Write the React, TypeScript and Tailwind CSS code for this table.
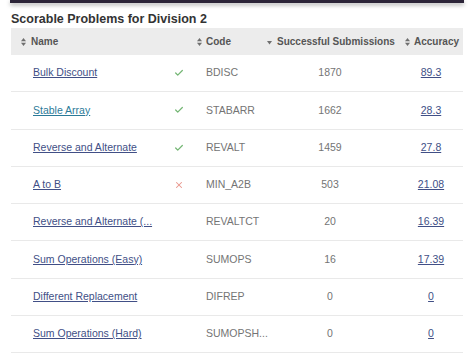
import { Check, X } from 'lucide-react';

type Row = {
  name: string;
  status: 'ok' | 'bad' | null;
  code: string;
  solved: string;
  accuracy: string;
  visited?: boolean;
};

const rows: Row[] = [
  { name: 'Bulk Discount', status: 'ok', code: 'BDISC', solved: '1870', accuracy: '89.3' },
  { name: 'Stable Array', status: 'ok', code: 'STABARR', solved: '1662', accuracy: '28.3', visited: true },
  { name: 'Reverse and Alternate', status: 'ok', code: 'REVALT', solved: '1459', accuracy: '27.8' },
  { name: 'A to B', status: 'bad', code: 'MIN_A2B', solved: '503', accuracy: '21.08' },
  { name: 'Reverse and Alternate (...', status: null, code: 'REVALTCT', solved: '20', accuracy: '16.39' },
  { name: 'Sum Operations (Easy)', status: null, code: 'SUMOPS', solved: '16', accuracy: '17.39' },
  { name: 'Different Replacement', status: null, code: 'DIFREP', solved: '0', accuracy: '0' },
  { name: 'Sum Operations (Hard)', status: null, code: 'SUMOPSH...', solved: '0', accuracy: '0' },
];

function SortIcon() {
  return (
    <svg width="5" height="8" viewBox="0 0 5 8" className="shrink-0">
      <path d="M2.5 0 L5 3.3 L0 3.3 Z" fill="#6f6f6f" />
      <path d="M2.5 8 L5 4.7 L0 4.7 Z" fill="#6f6f6f" />
    </svg>
  );
}

function SortDown() {
  return (
    <svg width="5" height="4" viewBox="0 0 5 4" className="shrink-0 mt-[2px]">
      <path d="M0 0 L5 0 L2.5 3.5 Z" fill="#6f6f6f" />
    </svg>
  );
}

const cols = 'grid grid-cols-[154px_27px_70px_138px_64px]';

export default function App() {
  return (
    <div
      className="w-[474px] h-[355px] overflow-hidden bg-white"
      style={{ fontFamily: '"Liberation Sans", Arial, sans-serif' }}
    >
      <div className="ml-[10px] w-[454px] h-[3px] bg-[#2c2438] shadow-[0_2px_4px_rgba(0,0,0,0.35)]" />

      <div className="px-[11px]">
        <h1 className="mt-[9px] text-[12.5px] leading-[15px] font-bold text-[#333]">
          Scorable Problems for Division 2
        </h1>

        <div className={`${cols} mt-[1px] h-[27px] items-center bg-[#ececec] text-[10px] font-bold text-[#555]`}>
          <div className="flex items-center gap-[5px] pl-[10px]">
            <SortIcon />
            <span>Name</span>
          </div>
          <div />
          <div className="flex items-center gap-[4px] pl-[5px]">
            <SortIcon />
            <span>Code</span>
          </div>
          <div className="flex items-center gap-[5px] pl-[5px]">
            <SortDown />
            <span>Successful Submissions</span>
          </div>
          <div className="flex items-center gap-[4px] pl-[5px]">
            <SortIcon />
            <span>Accuracy</span>
          </div>
        </div>

        {rows.map((row) => (
          <div
            key={row.code}
            className={`${cols} h-[37.3px] items-center border-b border-[#e9e9e9] text-[10.5px]`}
          >
            <div className="pl-[22px] truncate">
              <a
                href="#"
                className={`underline ${row.visited ? 'text-[#2b7a98]' : 'text-[#414f86]'}`}
              >
                {row.name}
              </a>
            </div>
            <div className="flex justify-center">
              {row.status === 'ok' && <Check size={10} strokeWidth={3} className="text-[#74b674]" />}
              {row.status === 'bad' && <X size={10} strokeWidth={2.5} className="text-[#e8978d]" />}
            </div>
            <div className="pl-[14px] text-[#747474]">{row.code}</div>
            <div className="text-center text-[#747474] pr-[2px]">{row.solved}</div>
            <div className="text-center pr-[2px]">
              <a href="#" className="underline text-[#414f86]">
                {row.accuracy}
              </a>
            </div>
          </div>
        ))}
      </div>
    </div>
  );
}
